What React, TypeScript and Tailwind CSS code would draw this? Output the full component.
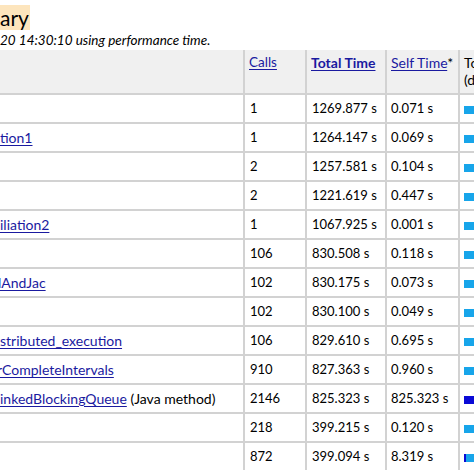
import React from "react";

type Row = {
  name?: React.ReactNode;
  calls: string;
  total: string;
  self: string;
  bar: "light" | "dark" | "band";
};

const link = "text-[#1a1aa0] underline underline-offset-[2px]";

const rows: Row[] = [
  { calls: "1", total: "1269.877 s", self: "0.071 s", bar: "light" },
  { name: <a className={link}>tion1</a>, calls: "1", total: "1264.147 s", self: "0.069 s", bar: "light" },
  { calls: "2", total: "1257.581 s", self: "0.104 s", bar: "light" },
  { calls: "2", total: "1221.619 s", self: "0.447 s", bar: "light" },
  { name: <a className={link}>iliation2</a>, calls: "1", total: "1067.925 s", self: "0.001 s", bar: "light" },
  { calls: "106", total: "830.508 s", self: "0.118 s", bar: "light" },
  { name: <a className={`${link} -ml-[2px]`}>lAndJac</a>, calls: "102", total: "830.175 s", self: "0.073 s", bar: "light" },
  { calls: "102", total: "830.100 s", self: "0.049 s", bar: "light" },
  { name: <a className={link}>stributed_execution</a>, calls: "106", total: "829.610 s", self: "0.695 s", bar: "light" },
  { name: <a className={`${link} -ml-[3px]`}>rCompleteIntervals</a>, calls: "910", total: "827.363 s", self: "0.960 s", bar: "light" },
  {
    name: (
      <>
        <a className={link}>inkedBlockingQueue</a> (Java method)
      </>
    ),
    calls: "2146",
    total: "825.323 s",
    self: "825.323 s",
    bar: "dark",
  },
  { calls: "218", total: "399.215 s", self: "0.120 s", bar: "light" },
  { calls: "872", total: "399.094 s", self: "8.319 s", bar: "band" },
];

function Bar({ kind }: { kind: Row["bar"] }) {
  if (kind === "dark") return <div className="h-[8px] w-[100px] bg-[#0a0ad6]" />;
  if (kind === "band")
    return (
      <div className="flex h-[8px] w-[100px]">
        <div className="w-[2px] bg-[#0a0ad6]" />
        <div className="flex-1 bg-[#17a5ea]" />
      </div>
    );
  return <div className="h-[8px] w-[100px] bg-[#17a5ea]" />;
}

export default function App() {
  return (
    <div
      className="w-[474px] h-[474px] overflow-hidden bg-white text-black"
      style={{ fontFamily: "Lato, 'Noto Sans', sans-serif" }}
    >
      <div className="pt-[5px] h-[31px]">
        <span className="inline-block bg-[#fde5bd] text-[21px] leading-[25px] pr-[1px]">ary</span>
      </div>
      <div className="italic text-[13.5px] leading-[19px] h-[19px] whitespace-nowrap">
        20 14:30:10 using performance time.
      </div>
      <div className="grid grid-cols-[243px_60px_78px_71px_120px] grid-rows-[43px] auto-rows-[27px] gap-[2px] bg-[#d2d2d2] w-[580px] text-[13px]">
        <div className="bg-[#f0f0f0]" />
        <div className="bg-[#f0f0f0] pl-[4px] pt-[4px] leading-[17px] text-[13.5px]">
          <a className={link}>Calls</a>
        </div>
        <div className="bg-[#f0f0f0] pl-[4px] pt-[4px] leading-[17px] whitespace-nowrap text-[14px]">
          <a className={`${link} font-bold`}>Total Time</a>
        </div>
        <div className="bg-[#f0f0f0] pl-[4px] pt-[4px] leading-[17px] whitespace-nowrap text-[14px]">
          <a className={link}>Self Time</a>*
        </div>
        <div className="bg-[#f0f0f0] pl-[4px] pt-[4px] leading-[17px] whitespace-nowrap text-[14px]">
          Total Time Plot
          <br />
          (dark band = self time)
        </div>
        {rows.map((r, i) => (
          <React.Fragment key={i}>
            <div className="bg-white flex items-center overflow-hidden whitespace-nowrap text-[14px]">
              <span>{r.name}</span>
            </div>
            <div className="bg-white flex items-center pl-[5px]">{r.calls}</div>
            <div className="bg-white flex items-center pl-[5px] whitespace-nowrap">{r.total}</div>
            <div className="bg-white flex items-center pl-[4px] whitespace-nowrap">{r.self}</div>
            <div className="bg-white flex items-center pl-[4px] pt-[2px]">
              <Bar kind={r.bar} />
            </div>
          </React.Fragment>
        ))}
      </div>
    </div>
  );
}
